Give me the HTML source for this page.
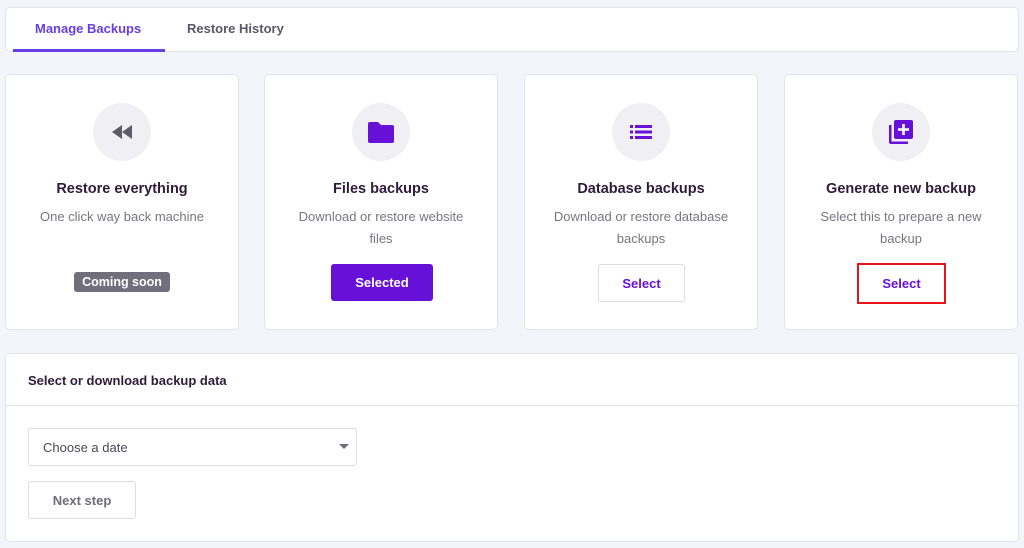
<!DOCTYPE html>
<html><head><style>
*{box-sizing:border-box;margin:0;padding:0}
body{width:1024px;height:548px;background:#f4f4fb;font-family:"Liberation Sans",sans-serif;position:relative;overflow:hidden}
.box{position:absolute;background:#fff;border:1px solid #e3e3ec;border-radius:5px}
.tab{position:absolute;top:21px;font-size:13px;font-weight:bold}
.card{top:74px;width:234px;height:256px;text-align:center}
.circ{position:absolute;left:87px;top:28px;width:58px;height:58px;border-radius:50%;background:#f0f0f4;display:flex;align-items:center;justify-content:center}
.t{position:absolute;left:0;right:0;top:106px;font-size:14.5px;font-weight:bold;color:#2f1c3a}
.d{position:absolute;left:0;right:0;top:131px;font-size:13px;color:#777580;line-height:22px;padding:0 30px}
.btn{position:absolute;font-size:13px;font-weight:bold;display:flex;align-items:center;justify-content:center;border-radius:3px}
</style></head><body>
<div class="box" style="left:5px;top:7px;width:1014px;height:45px"></div>
<div class="tab" style="left:35px;color:#673de6">Manage Backups</div>
<div class="tab" style="left:187px;color:#5a5866">Restore History</div>
<div style="position:absolute;left:13px;top:49px;width:152px;height:3px;background:#673de6"></div>

<div class="box card" style="left:5px">
<div class="circ"><svg width="20" height="14" viewBox="0 0 20 14"><path d="M10 0L0 7l10 7zM20 0L10 7l10 7z" fill="#5d5b68"/></svg></div>
<div class="t">Restore everything</div>
<div class="d">One click way back machine</div>
<div class="btn" style="left:68px;top:197px;width:96px;height:20px;background:#726f7c;color:#fff;font-size:12.5px">Coming soon</div>
</div>
<div class="box card" style="left:264px">
<div class="circ"><svg width="26" height="21" viewBox="0 0 26 21"><path d="M2 0h8l3 3h11a2 2 0 0 1 2 2v14a2 2 0 0 1-2 2H2a2 2 0 0 1-2-2V2a2 2 0 0 1 2-2z" fill="#6711d8"/></svg></div>
<div class="t">Files backups</div>
<div class="d">Download or restore website files</div>
<div class="btn" style="left:66px;top:189px;width:102px;height:37px;background:#6711d8;color:#fff">Selected</div>
</div>
<div class="box card" style="left:524px">
<div class="circ"><svg width="22" height="14" viewBox="0 0 22 14"><g fill="#6711d8"><rect x="0" y="0" width="3" height="3"/><rect x="5" y="0" width="17" height="3"/><rect x="0" y="5.5" width="3" height="3"/><rect x="5" y="5.5" width="17" height="3"/><rect x="0" y="11" width="3" height="3"/><rect x="5" y="11" width="17" height="3"/></g></svg></div>
<div class="t">Database backups</div>
<div class="d" style="padding:0 20px">Download or restore database backups</div>
<div class="btn" style="left:73px;top:189px;width:87px;height:38px;border:1px solid #dcdce4;color:#6711d8">Select</div>
</div>
<div class="box card" style="left:784px">
<div class="circ"><svg width="26" height="26" viewBox="0 0 26 26"><path d="M1 6v17a2 2 0 0 0 2 2h17v-2.5H3.5V6z" fill="#6711d8"/><rect x="6" y="1" width="19" height="19" rx="2" fill="#6711d8"/><path d="M15.5 5v11M10 10.5h11" stroke="#fff" stroke-width="2.6"/></svg></div>
<div class="t">Generate new backup</div>
<div class="d" style="padding:0 20px">Select this to prepare a new backup</div>
<div class="btn" style="left:72px;top:188px;width:89px;height:41px;border:2px solid #e8141c;border-radius:0;color:#6711d8">Select</div>
</div>

<div class="box" style="left:5px;top:353px;width:1014px;height:189px">
<div style="position:absolute;left:22px;top:19px;font-size:13px;font-weight:bold;color:#2f1c3a">Select or download backup data</div>
<div style="position:absolute;left:0;right:0;top:51px;border-top:1px solid #e3e3ec"></div>
<div style="position:absolute;left:22px;top:74px;width:329px;height:38px;border:1px solid #dcdce4;border-radius:3px">
<span style="position:absolute;left:14px;top:11px;font-size:13px;color:#4a4856">Choose a date</span>
<span style="position:absolute;right:7px;top:15px;border-left:5px solid transparent;border-right:5px solid transparent;border-top:5px solid #6e6c78"></span></div>
<div class="btn" style="left:22px;top:127px;width:108px;height:38px;border:1px solid #dcdce4;color:#6e6c78">Next step</div>
</div>
</body></html>
